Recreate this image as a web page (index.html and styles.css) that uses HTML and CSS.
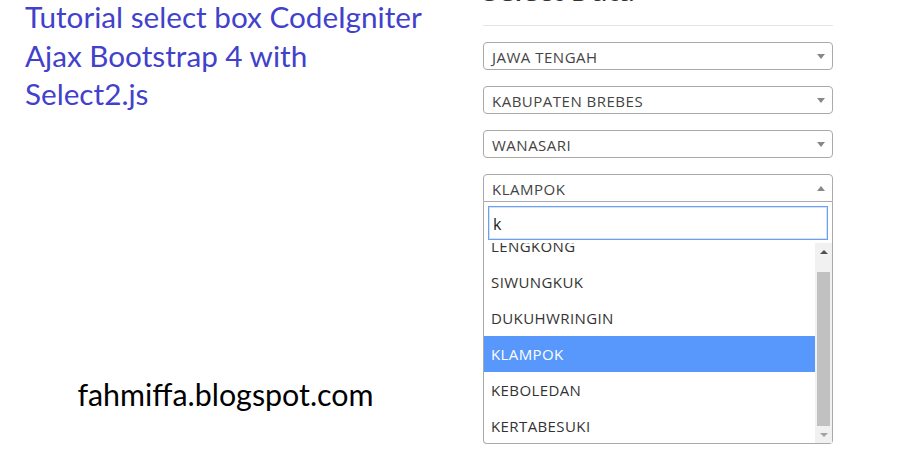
FILE: index.html
```html
<!DOCTYPE html>
<html lang="id">
<head>
<meta charset="utf-8">
<title>Select2</title>
<link rel="stylesheet" href="styles.css">
</head>
<body>
<div class="page">
  <div class="left">
    <h1 class="title">Tutorial select box CodeIgniter<br>Ajax Bootstrap 4 with<br>Select2.js</h1>
    <p class="site">fahmiffa.blogspot.com</p>
  </div>
  <div class="right">
    <h2 class="heading">Select Data</h2>
    <hr class="rule">
    <div class="stack">
      <div class="select"><span class="value">JAWA TENGAH</span><span class="arrow"><span class="tri-down"></span></span></div>
      <div class="select"><span class="value">KABUPATEN BREBES</span><span class="arrow"><span class="tri-down"></span></span></div>
      <div class="select"><span class="value">WANASARI</span><span class="arrow"><span class="tri-down"></span></span></div>
      <div class="open-wrap">
        <div class="select select-open"><span class="value">KLAMPOK</span><span class="arrow"><span class="tri-up"></span></span></div>
        <div class="dropdown">
          <div class="search"><div class="search-field">k</div></div>
          <div class="results">
            <div class="options-view">
              <ul class="options">
                <li class="option">LENGKONG</li>
                <li class="option">SIWUNGKUK</li>
                <li class="option">DUKUHWRINGIN</li>
                <li class="option option-active">KLAMPOK</li>
                <li class="option">KEBOLEDAN</li>
                <li class="option">KERTABESUKI</li>
              </ul>
            </div>
            <div class="scrollbar">
              <div class="sb-btn"><span class="sb-up"></span></div>
              <div class="sb-track"><div class="sb-thumb"></div></div>
              <div class="sb-btn"><span class="sb-down"></span></div>
            </div>
          </div>
        </div>
      </div>
    </div>
  </div>
</div>
</body>
</html>
```
FILE: styles.css
```css
* { box-sizing: border-box; }
html, body { margin: 0; padding: 0; background: #fff; }
body { width: 903px; height: 474px; overflow: hidden; font-family: "Open Sans", "Noto Sans", sans-serif; }

.page { display: flex; align-items: flex-start; }

.left { width: 451px; flex: none; }
.title {
  margin: -2px 0 0 0;
  padding: 0 0 0 25px;
  font-family: "Lato", "Open Sans", sans-serif;
  font-weight: 400;
  font-size: 29.7px;
  line-height: 38.7px;
  color: #4141cc;
}
.site {
  margin: 263px 0 0 0;
  text-align: center;
  font-family: "Lato", "Open Sans", sans-serif;
  font-size: 30.4px;
  line-height: 34px;
  color: #000;
}

.right { width: 350px; margin-left: 32px; flex: none; }
.heading {
  margin: -26px 0 0 0;
  font-size: 28px;
  line-height: 32px;
  font-weight: 600;
  color: #333;
}
.rule { margin: 19px 0 16px 0; border: 0; border-top: 1px solid #e5e5e5; height: 0; }

.stack { display: flex; flex-direction: column; gap: 16px; }

.select {
  display: flex;
  align-items: center;
  height: 28px;
  border: 1px solid #aaa;
  border-radius: 4px;
  padding-left: 8px;
  font-size: 15px;
  letter-spacing: 0.5px;
  color: #444;
  background: #fff;
}
.value { flex: 1; line-height: 26px; padding-top: 2px; }
.arrow { width: 20px; height: 26px; margin-right: 1px; display: flex; align-items: center; justify-content: center; }
.tri-down { width: 0; height: 0; border-style: solid; border-width: 5px 4px 0 4px; border-color: #888 transparent transparent transparent; }
.tri-up { width: 0; height: 0; border-style: solid; border-width: 0 4px 5px 4px; border-color: transparent transparent #888 transparent; }

.select-open { border-bottom-left-radius: 0; border-bottom-right-radius: 0; }

.dropdown {
  border: 1px solid #aaa;
  border-top: 0;
  border-radius: 0 0 4px 4px;
  background: #fff;
}
.search { padding: 4px 4px 3px 4px; }
.search-field {
  height: 34px;
  border: 1px solid #6e9ff2;
  box-shadow: inset 0 0 0 1px rgba(110,159,242,0.3);
  padding: 2px 0 0 4px;
  font-size: 16px;
  line-height: 30px;
  color: #222;
}

.results { display: flex; height: 200px; overflow: hidden; }
.options-view { flex: 1; overflow: hidden; }
.options { list-style: none; margin: -15px 0 0 0; padding: 0; }
.option {
  height: 36px;
  padding: 6px 6px 6px 7px;
  line-height: 24px;
  font-size: 15px;
  letter-spacing: 0.4px;
  color: #333;
}
.option-active { background: #5897fb; color: #fff; }

.scrollbar { width: 17px; flex: none; background: #f1f1f1; display: flex; flex-direction: column; }
.sb-btn { height: 17px; display: flex; align-items: center; justify-content: center; }
.sb-track { flex: 1; padding-top: 12px; }
.sb-thumb { height: 154px; margin: 0 2px; background: #c1c1c1; }
.sb-up { width: 0; height: 0; border-style: solid; border-width: 0 4px 4px 4px; border-color: transparent transparent #505050 transparent; }
.sb-down { width: 0; height: 0; border-style: solid; border-width: 4px 4px 0 4px; border-color: #a3a3a3 transparent transparent transparent; }
```
